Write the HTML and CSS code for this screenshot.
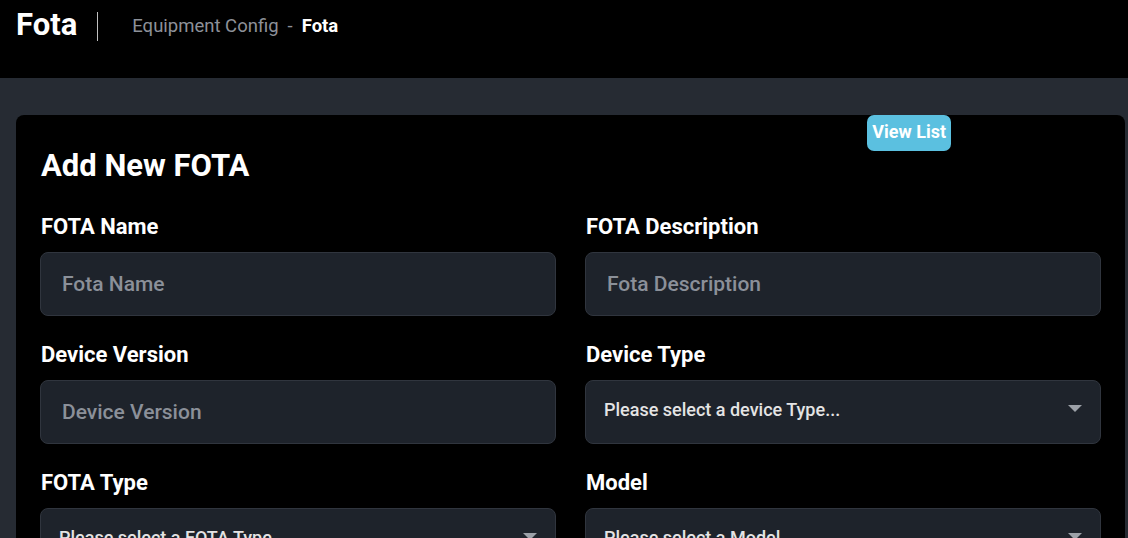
FILE: index.html
```html
<!DOCTYPE html>
<html lang="en">
<head>
    <meta charset="UTF-8">
    <meta name="viewport" content="width=device-width, initial-scale=1.0">
    <title>Fota</title>
    <link rel="stylesheet" href="styles.css">
</head>
<body>

    <header class="top-bar">
        <span class="page-title">Fota</span>
        <span class="divider"></span>
        <nav class="breadcrumb">
            <span class="crumb">Equipment Config</span>
            <span class="crumb-sep">-</span>
            <span class="crumb current">Fota</span>
        </nav>
    </header>

    <main class="page-body">
        <section class="form-card">
            <div class="card-top">
                <a href="#" class="list-btn">View List</a>
            </div>
            <h2 class="card-title">Add New FOTA</h2>

            <form class="fota-form">
                <div class="field">
                    <label for="fotaName">FOTA Name</label>
                    <input type="text" id="fotaName" placeholder="Fota Name">
                </div>
                <div class="field">
                    <label for="fotaDesc">FOTA Description</label>
                    <input type="text" id="fotaDesc" placeholder="Fota Description">
                </div>
                <div class="field">
                    <label for="deviceVersion">Device Version</label>
                    <input type="text" id="deviceVersion" placeholder="Device Version">
                </div>
                <div class="field">
                    <label for="deviceType">Device Type</label>
                    <div class="select-wrap">
                        <select id="deviceType">
                            <option>Please select a device Type...</option>
                        </select>
                    </div>
                </div>
                <div class="field">
                    <label for="fotaType">FOTA Type</label>
                    <div class="select-wrap">
                        <select id="fotaType">
                            <option>Please select a FOTA Type...</option>
                        </select>
                    </div>
                </div>
                <div class="field">
                    <label for="model">Model</label>
                    <div class="select-wrap">
                        <select id="model">
                            <option>Please select a Model...</option>
                        </select>
                    </div>
                </div>
            </form>
        </section>
    </main>

</body>
</html>
```

FILE: styles.css
```css
* {
    margin: 0;
    padding: 0;
    box-sizing: border-box;
    font-family: Roboto, "Liberation Sans", sans-serif;
}

body {
    background-color: #262b33;
    color: #fff;
    overflow: hidden;
}

.top-bar {
    height: 78px;
    background: #000;
    display: flex;
    align-items: flex-start;
    padding: 7px 0 0 16px;
}

.page-title {
    font-size: 31px;
    font-weight: bold;
    line-height: 36px;
}

.divider {
    width: 1px;
    height: 29px;
    margin: 5px 34px 0 20px;
    background: #c0c0c0;
}

.breadcrumb {
    display: flex;
    gap: 9px;
    font-size: 18.5px;
    line-height: 24px;
    margin-top: 7px;
    color: #8d9199;
}

.crumb.current {
    color: #fff;
    font-weight: bold;
}

.page-body {
    padding: 37px 3px 0 16px;
}

.form-card {
    background: #000;
    border-radius: 8px;
    padding: 0 24px 40px 24px;
    min-height: 600px;
}

.card-top {
    display: flex;
    justify-content: flex-end;
    padding-right: 150px;
}

.list-btn {
    display: block;
    height: 36px;
    line-height: 34px;
    padding: 0 5px;
    background: #5bc0e0;
    color: #fff;
    font-size: 18px;
    font-weight: bold;
    text-decoration: none;
    border-radius: 7px;
}

.card-title {
    font-size: 31px;
    line-height: 36px;
    font-weight: bold;
    margin-top: -3px;
    margin-bottom: 29px;
    padding-left: 1px;
}

.fota-form {
    display: grid;
    grid-template-columns: 1fr 1fr;
    column-gap: 29px;
    row-gap: 25px;
}

.field label {
    display: block;
    font-size: 22px;
    line-height: 28px;
    font-weight: bold;
    margin-bottom: 11px;
    padding-left: 1px;
}

.field input,
.field select {
    width: 100%;
    height: 64px;
    background: #1e232b;
    border: 1px solid #30353e;
    border-radius: 8px;
    outline: none;
}

.field input {
    padding: 0 21px;
    font-size: 21px;
    font-weight: 500;
    color: #fff;
}

.field input::placeholder {
    color: #8b9099;
}

.select-wrap {
    position: relative;
}

.field select {
    appearance: none;
    -webkit-appearance: none;
    padding: 0 50px 6px 18px;
    font-size: 18px;
    font-weight: 500;
    color: #e4e4e4;
}

.select-wrap::after {
    content: "";
    position: absolute;
    right: 19px;
    top: 25px;
    border-left: 7px solid transparent;
    border-right: 7px solid transparent;
    border-top: 7px solid #9ca1a8;
}
```
